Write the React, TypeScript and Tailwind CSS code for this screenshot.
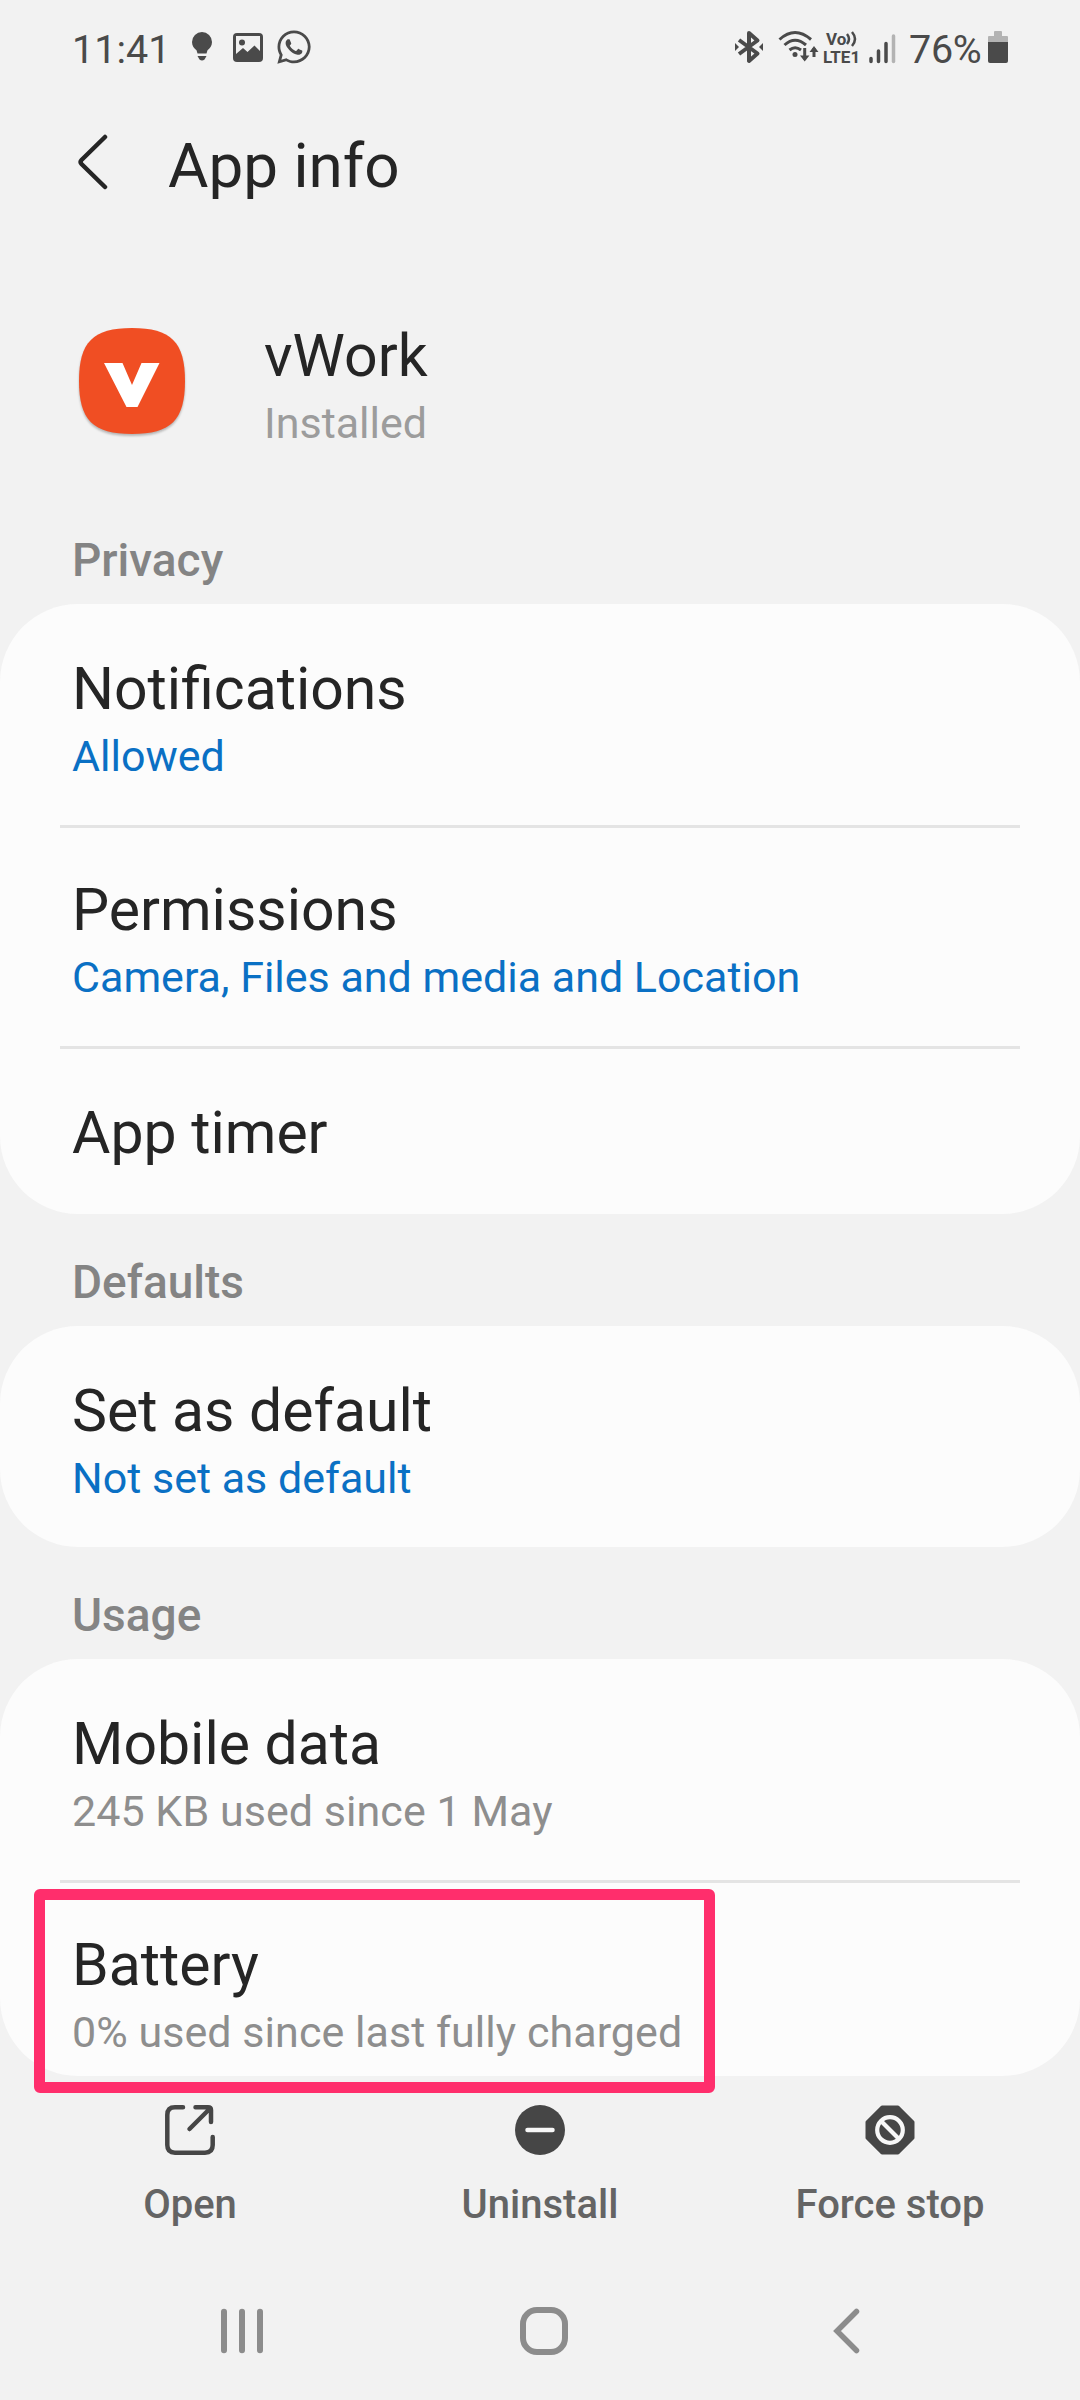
import type { ReactNode } from "react";
import { FaWhatsapp } from "react-icons/fa";

type RowProps = { title: string; detail?: string; tone?: "link" | "muted"; divided?: boolean; children?: ReactNode };

function Row({ title, detail, tone = "link", divided, children }: RowProps) {
  return (
    <div className={"relative px-[72px] " + (detail ? "h-[221px] pt-[50px]" : "h-[168px] pt-[52px]")}>
      {divided && <div className="absolute inset-x-[60px] top-0 h-[3px] bg-[#e4e4e4]" />}
      <div className="text-[58.900px] leading-[70px] text-[#252525]">{title}</div>
      {detail && (
        <div className={"mt-[3px] text-[43px] leading-[58px] " + (tone === "link" ? "text-[#0a70c4]" : "tracking-[0.05px] text-[#8e8e8e]")}>
          {detail}
        </div>
      )}
      {children}
    </div>
  );
}

function Heading({ children }: { children: ReactNode }) {
  return (
    <h2 className="h-[112px] px-[72px] pt-[40px] text-[46px] font-medium leading-[56px] text-[#848484]">{children}</h2>
  );
}

function StatusBar() {
  return (
    <header className="mb-[2px] flex h-[94px] items-center px-[72px] text-[#4a4a4a]">
      <span className="w-[94px] pt-[6px] text-[39.500px] leading-[48px]">11:41</span>
      <svg className="ml-[26px]" width="20" height="30" viewBox="0 0 20 30" fill="currentColor">
        <path d="M10 0a10 10 0 0 1 10 10c0 4-2.200 6.500-4.500 8.300L14.500 21.500h-9L4.500 18.300C2.200 16.500 0 14 0 10A10 10 0 0 1 10 0z" />
        <path d="M5.500 24h9l-2 3.600q-2.500 2-5 0z" />
      </svg>
      <svg className="ml-[21px]" width="30" height="29" viewBox="0 0 30 29">
        <rect width="30" height="29" rx="4" fill="currentColor" />
        <path d="M3 3H27V18L21.500 12.500 14.500 19 10 15 3 21z" fill="#f1f1f1" />
        <circle cx="9" cy="9.500" r="3" fill="currentColor" />
      </svg>
      <FaWhatsapp className="ml-[12px]" size={38} />
      <div className="ml-auto flex items-center">
        <svg width="28" height="34" viewBox="0 0 28 34" fill="none">
          <path d="M4 10L22.500 23.500 14 31V3L22.500 10.500 4 24" stroke="currentColor" strokeWidth="4" strokeLinejoin="round" />
          <path d="M0 13v8l4-4zM28 13v8l-4-4z" fill="currentColor" />
        </svg>
        <svg className="ml-[15px]" width="41" height="34" viewBox="0 0 41 34" fill="none" stroke="currentColor">
          <path d="M1.500 9.500Q17 -4.500 33 9.500M6.500 15Q17 5.500 28 15M11.500 20Q17 15.500 23 20" strokeWidth="3" />
          <circle cx="17" cy="24.500" r="2.500" fill="currentColor" stroke="none" />
          <path d="M26.700 18v11.500M36 27V18" strokeWidth="3" />
          <path d="M22 25.500h9.400l-4.700 6zM31.500 22h9l-4.500-6z" fill="currentColor" stroke="none" />
        </svg>
        <div className="ml-[4px] mt-[2px] flex w-[41px] flex-col items-start text-[17px] font-bold leading-[18px]">
          <span className="ml-[3px] flex">
            Vo
            <svg width="11" height="17" viewBox="0 0 11 17" fill="none" stroke="currentColor" strokeWidth="2.500">
              <path d="M1 4q4 5 0 10M6 2q6 7 0 14" />
            </svg>
          </span>
          <span>LTE1</span>
        </div>
        <svg className="ml-[5px] mt-[3px]" width="27" height="30" viewBox="0 0 27 30" fill="none" stroke="currentColor" strokeWidth="3.500" strokeLinecap="round">
          <path d="M2 24.500v3M9.500 17v10.500M17 9.500v18" />
          <path d="M24.500 2v25.500" stroke="#b3b3b3" />
        </svg>
        <span className="ml-[13px] w-[73px] pt-[6px] text-[39.500px] leading-[48px] tracking-[-0.300px]">76%</span>
        <svg className="ml-[6px]" width="20" height="32" viewBox="0 0 20 32">
          <path d="M6 1Q6 0 7 0h6q1 0 1 1v4h5q1 0 1 1v6H0V6q0-1 1-1h5z" fill="#b3b3b3" />
          <path d="M0 11h20v19q0 2-2 2H2q-2 0-2-2z" fill="currentColor" />
        </svg>
      </div>
    </header>
  );
}

function Action({ label, children }: { label: string; children: ReactNode }) {
  return (
    <button className="flex w-[350px] flex-col items-center gap-[26px] text-[40px] font-medium leading-[48px] text-[#646464]">
      {children}
      {label}
    </button>
  );
}

export default function App() {
  return (
    <main className="flex h-[2400px] w-[1080px] flex-col overflow-hidden bg-[#f2f2f2] font-[Roboto,sans-serif]">
      <StatusBar />
      <div className="flex h-[138px] items-center pl-[78px]">
        <svg className="mb-[6px]" width="30" height="56" viewBox="0 0 30 56" fill="none" stroke="#252525" strokeWidth="4.500" strokeLinecap="round" strokeLinejoin="round">
          <path d="M27 3L3.500 26q-2 2 0 4L27 53" />
        </svg>
        <h1 className="ml-[60px] pt-[1px] text-[62px] leading-[74px] text-[#252525]">App info</h1>
      </div>
      <section className="flex h-[258px] items-start pl-[79px] pt-[87px]">
        <svg className="mt-[7px] overflow-visible drop-shadow-[0_2px_1px_rgba(0,0,0,0.25)]" width="106" height="106" viewBox="0 0 106 106">
          <path d="M53 0C92 0 106 14 106 53S92 106 53 106 0 92 0 53 14 0 53 0z" fill="#f04e23" />
          <path d="M25 35h18.500L53 57l9.500-22H80.500L58.500 79H47.500z" fill="#fff" />
        </svg>
        <div className="ml-[79px]">
          <div className="text-[59px] leading-[70px] text-[#252525]">vWork</div>
          <div className="mt-[3px] text-[43px] leading-[58px] text-[#9c9c9c]">Installed</div>
        </div>
      </section>

      <Heading>Privacy</Heading>
      <section className="rounded-[78px] bg-[#fcfcfc]">
        <Row title="Notifications" detail="Allowed" />
        <Row title="Permissions" detail="Camera, Files and media and Location" divided />
        <Row title="App timer" divided />
      </section>
      <Heading>Defaults</Heading>
      <section className="rounded-[78px] bg-[#fcfcfc]">
        <Row title="Set as default" detail="Not set as default" />
      </section>
      <Heading>Usage</Heading>
      <section className="h-[417px] rounded-[78px] bg-[#fcfcfc]">
        <Row title="Mobile data" detail="245 KB used since 1 May" tone="muted" />
        <Row title="Battery" detail="0% used since last fully charged" tone="muted" divided>
          <div className="absolute left-[34px] top-[9px] z-10 h-[204px] w-[681px] rounded-[6px] border-[11.500px] border-[#ff2e6c]" />
        </Row>
      </section>

      <nav className="flex h-[174px] justify-center pt-[29px]">
        <Action label="Open">
          <svg width="50" height="50" viewBox="0 0 50 50" fill="none" stroke="#464646" strokeWidth="4.500" strokeLinecap="round" strokeLinejoin="round">
            <path d="M18 2.300H10Q2.300 2.300 2.300 10V40Q2.300 47.700 10 47.700H40Q47.700 47.700 47.700 40V32M30.500 2.300H43Q46 2.300 46 5V17M45 3.500L24.500 24" />
          </svg>
        </Action>
        <Action label="Uninstall">
          <svg width="50" height="50" viewBox="0 0 50 50">
            <circle cx="25" cy="25" r="25" fill="#464646" />
            <path d="M12.500 25h25" stroke="#f8f8f8" strokeWidth="4.500" strokeLinecap="round" />
          </svg>
        </Action>
        <Action label="Force stop">
          <svg width="50" height="50" viewBox="0 0 50 50" fill="none">
            <path d="M17 2H33L48 17V33L33 48H17L2 33V17z" fill="#464646" stroke="#464646" strokeWidth="3" strokeLinejoin="round" />
            <circle cx="25" cy="25" r="12.800" stroke="#f8f8f8" strokeWidth="4.200" />
            <path d="M16.500 16.500L33.500 33.500" stroke="#f8f8f8" strokeWidth="4.200" />
          </svg>
        </Action>
      </nav>
      <nav className="flex h-[150px] items-start pl-[220px] pt-[56px]">
        <svg width="44" height="48" viewBox="0 0 44 48" fill="none" stroke="#8c8c8c" strokeWidth="6" strokeLinecap="round">
          <path d="M4 5.700V44.300M22 5.700V44.300M40 5.700V44.300" />
        </svg>
        <svg className="ml-[256px]" width="48" height="52" viewBox="0 0 48 52" fill="none" stroke="#8c8c8c" strokeWidth="6">
          <rect x="3" y="4" width="42" height="42" rx="14" />
        </svg>
        <svg className="ml-[264px]" width="30" height="50" viewBox="0 0 30 50" fill="none" stroke="#8c8c8c" strokeWidth="5.500" strokeLinecap="round">
          <path d="M24.500 5.500L5 25L24.500 44.500" />
        </svg>
      </nav>
    </main>
  );
}
